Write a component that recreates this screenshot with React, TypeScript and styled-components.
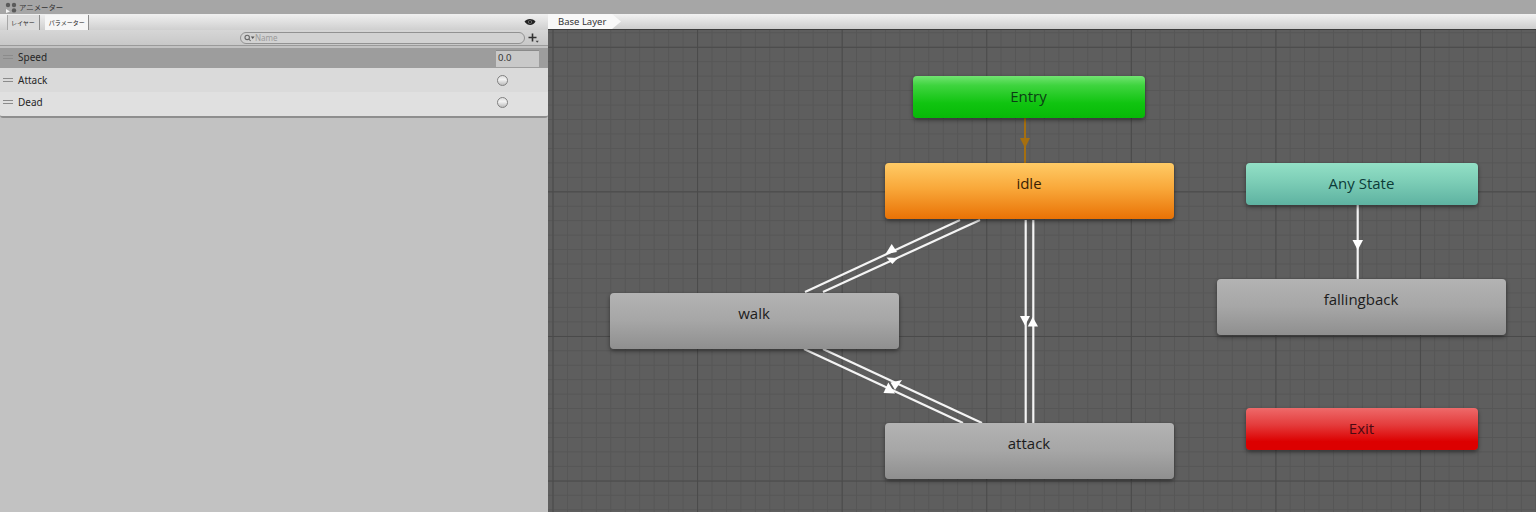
import React from "react";
import styled, { createGlobalStyle } from "styled-components";

const Global = createGlobalStyle`
  html, body { margin: 0; padding: 0; width: 1536px; height: 512px; overflow: hidden; }
  body { font-family: "Noto Sans", "Noto Sans CJK JP", sans-serif; background: #c2c2c2; }
  #root { width: 1536px; height: 512px; }
`;

const Root = styled.div`
  width: 1536px;
  height: 512px;
  display: flex;
  flex-direction: column;
`;
const TitleBar = styled.div`
  height: 14px;
  flex: none;
  background: #a6a6a6;
  display: flex;
  align-items: center;
  gap: 2px;
  padding-left: 5px;
`;
const TitleText = styled.span`
  font-family: "Noto Sans CJK JP", sans-serif;
  font-size: 7.4px;
  line-height: 14px;
  color: #333;
`;
const Main = styled.div`
  flex: 1;
  min-height: 0;
  display: flex;
`;
const LeftPanel = styled.div`
  width: 548px;
  flex: none;
  background: #c2c2c2;
  display: flex;
  flex-direction: column;
`;
const TabBar = styled.div`
  height: 16px;
  flex: none;
  display: flex;
  align-items: flex-end;
  padding-left: 7px;
  padding-right: 12px;
  gap: 5px;
  background: linear-gradient(#f0f0f0, #cfcfcf);
`;
const Tab = styled.div<{ $active?: boolean }>`
  height: 15px;
  box-sizing: border-box;
  padding: 0 ${(p) => (p.$active ? 3 : 4)}px 0 3px;
  display: flex;
  align-items: center;
  font-family: "Noto Sans CJK JP", sans-serif;
  font-size: 6px;
  color: #222;
  background: ${(p) => (p.$active ? "#f6f6f6" : "#dcdcdc")};
  border-right: 1px solid #8c8c8c;
  border-left: 1px solid ${(p) => (p.$active ? "transparent" : "#a8a8a8")};
`;
const EyeWrap = styled.div`
  margin-left: auto;
  align-self: center;
  display: flex;
`;
const SearchRow = styled.div`
  height: 16px;
  flex: none;
  box-sizing: border-box;
  display: flex;
  align-items: center;
  justify-content: flex-end;
  padding-right: 9px;
  gap: 3px;
  background: linear-gradient(#d6d6d6, #c8c8c8);
  border-bottom: 1px solid #9a9a9a;
`;
const SearchBox = styled.div`
  width: 285px;
  height: 12px;
  box-sizing: border-box;
  border: 1px solid #929292;
  border-radius: 6px;
  background: #d2d2d2;
  display: flex;
  align-items: center;
  padding-left: 3px;
  font-size: 8px;
  color: #9a9a9a;
`;
const ParamList = styled.div`
  margin-top: 2px;
  flex: none;
  border-bottom: 2px solid #8e8e8e;
  border-radius: 0 0 3px 3px;
  display: flex;
  flex-direction: column;
  overflow: hidden;
`;
const Row = styled.div<{ $bg: string; $h: number; $pb: number }>`
  height: ${(p) => p.$h}px;
  box-sizing: border-box;
  padding: 0 0 ${(p) => p.$pb}px 3px;
  background: ${(p) => p.$bg};
  display: flex;
  align-items: center;
`;
const Handle = styled.div`
  width: 10px;
  height: 2px;
  border-top: 1px solid #8b8b8b;
  border-bottom: 1px solid #8b8b8b;
  margin-right: 5px;
`;
const RowName = styled.span`
  font-size: 10px;
  color: #262626;
  flex: 1;
`;
const NumberField = styled.div`
  width: 43px;
  height: 17px;
  box-sizing: border-box;
  background: #c9c9c9;
  border-top: 1px solid #8a8a8a;
  font-size: 9.5px;
  color: #333;
  line-height: 13px;
  padding-left: 2px;
  margin: 2px 9px 0 0;
`;
const Radio = styled.div`
  width: 11px;
  height: 11px;
  box-sizing: border-box;
  border-radius: 50%;
  border: 1px solid #808080;
  background: linear-gradient(#dedede, #f2f2f2 40%, #bcbcbc);
  margin: 1px 40px 0 0;
`;
const Graph = styled.div`
  flex: 1;
  min-width: 0;
  display: flex;
  flex-direction: column;
`;
const CrumbBar = styled.div`
  height: 15px;
  flex: none;
  background: linear-gradient(#f2f2f2, #cdcdcd);
  display: flex;
`;
const Crumb = styled.div`
  width: 73px;
  box-sizing: border-box;
  padding-left: 10px;
  font-size: 9.5px;
  line-height: 15px;
  color: #333;
  background: #f8f8f8;
  clip-path: polygon(0 0, 64px 0, 100% 50%, 64px 100%, 0 100%);
`;
const Canvas = styled.div`
  flex: 1;
  min-height: 0;
  position: relative;
  overflow: hidden;
  background-color: #5e5e5e;
  background-image:
    linear-gradient(to right, #4a4a4a 1px, transparent 1px),
    linear-gradient(to bottom, #4a4a4a 1px, transparent 1px),
    linear-gradient(to right, #565656 1px, transparent 1px),
    linear-gradient(to bottom, #565656 1px, transparent 1px);
  background-size: 144.6px 100%, 100% 144.6px, 14.46px 100%, 100% 14.46px;
  background-position: 4.5px 0, 0 16.8px, 4.5px 0, 0 2.3px;
  border-top: 1px solid #3c3c3c;
  box-sizing: border-box;
`;
const Edges = styled.svg`
  position: absolute;
  left: -548px;
  top: -30px;
  width: 1536px;
  height: 512px;
`;
const tones = {
  gray: "linear-gradient(#b3b3b3, #a6a6a6 50%, #8f8f8f)",
  green: "linear-gradient(#72e472, #3fd43f 22%, #10c410 65%, #07b907)",
  orange: "linear-gradient(#ffcb66, #f9a83a 45%, #e97205)",
  teal: "linear-gradient(#93e0c6, #7ccdb6 45%, #5eb2a1)",
  red: "linear-gradient(#ee6a6a, #e43c3c 40%, #dc0000 80%)",
};
const textTones = {
  gray: "#1c1c1c",
  green: "#0b3d14",
  orange: "#3a1f05",
  teal: "#0c3b38",
  red: "#4a0a12",
};
type Tone = keyof typeof tones;
const Node = styled.div<{ $x: number; $y: number; $w: number; $h: number; $tone: Tone }>`
  position: absolute;
  left: ${(p) => p.$x - 548}px;
  top: ${(p) => p.$y - 30}px;
  width: ${(p) => p.$w}px;
  height: ${(p) => p.$h}px;
  border-radius: 4px;
  background: ${(p) => tones[p.$tone]};
  box-shadow: 0 2px 4px rgba(0, 0, 0, 0.45);
  font-family: "Open Sans", "Noto Sans", sans-serif;
  font-size: 15px;
  line-height: 41px;
  padding-right: 1px;
  box-sizing: border-box;
  text-align: center;
  color: ${(p) => textTones[p.$tone]};
`;

const nodes: { label: string; x: number; y: number; w: number; h: number; tone: Tone }[] = [
  { label: "Entry", x: 913, y: 76, w: 232, h: 42, tone: "green" },
  { label: "idle", x: 885, y: 163, w: 289, h: 56, tone: "orange" },
  { label: "Any State", x: 1246, y: 163, w: 232, h: 42, tone: "teal" },
  { label: "fallingback", x: 1217, y: 279, w: 289, h: 56, tone: "gray" },
  { label: "Exit", x: 1246, y: 408, w: 232, h: 42, tone: "red" },
  { label: "walk", x: 610, y: 293, w: 289, h: 56, tone: "gray" },
  { label: "attack", x: 885, y: 423, w: 289, h: 56, tone: "gray" },
];

const lines: [number, number, number, number][] = [
  [960, 220, 805, 292],
  [980, 220, 823, 292],
  [823, 349, 982, 423],
  [804, 349, 963, 423],
  [1025.7, 220, 1025.7, 423],
  [1033.3, 220, 1033.3, 423],
  [1357.7, 205, 1357.7, 279],
];

const arrowHeads = [
  "891.7,244 885.5,254 897,252",
  "892.3,264 886.5,257.5 898,258",
  "883.5,393 888.3,382.5 895,393.5",
  "890.5,382.5 902,380 895,390",
  "1020,316 1030,316 1025,325.5",
  "1032.7,317 1027.7,326.5 1038,326.5",
  "1352.5,240 1363,240 1357.7,250",
];

const NodeMapIcon = () => (
  <svg width="12" height="11" viewBox="0 0 12 11">
    <circle cx="3" cy="3" r="2.2" fill="#5b5b5b" />
    <circle cx="9" cy="3" r="2.2" fill="#5b5b5b" />
    <circle cx="9" cy="8.4" r="2.2" fill="#5b5b5b" />
    <path d="M1 7 L5 9.5 L1 11 Z" fill="#f4f4f4" />
  </svg>
);

const EyeIcon = () => (
  <svg width="12" height="9" viewBox="0 0 12 9">
    <path d="M0.5 3.5 C3 0.5 8 0 11.5 3.5 C9.5 7.5 4 8.8 0.5 3.5 Z" fill="#222" />
    <ellipse cx="6" cy="4" rx="2" ry="1.8" fill="#777" />
    <circle cx="6" cy="4" r="1.1" fill="#111" />
  </svg>
);

const SearchIcon = () => (
  <svg width="11" height="8" viewBox="0 0 11 8">
    <circle cx="3.2" cy="3.4" r="2.2" fill="none" stroke="#666" strokeWidth="1.1" />
    <path d="M4.8 5 L6.6 7" stroke="#666" strokeWidth="1.1" />
    <path d="M6.8 2.4 H10.6 L8.7 5 Z" fill="#555" />
  </svg>
);

const PlusIcon = () => (
  <svg width="11" height="10" viewBox="0 0 11 10">
    <path d="M4.5 0.5 V8.5 M0.5 4.5 H8.5" stroke="#333" strokeWidth="1.6" />
    <path d="M7.6 7.8 H10.8 L9.2 9.8 Z" fill="#444" />
  </svg>
);

export default function App() {
  return (
    <Root>
      <Global />
      <TitleBar>
        <NodeMapIcon />
        <TitleText>アニメーター</TitleText>
      </TitleBar>
      <Main>
        <LeftPanel>
          <TabBar>
            <Tab>レイヤー</Tab>
            <Tab $active>パラメーター</Tab>
            <EyeWrap>
              <EyeIcon />
            </EyeWrap>
          </TabBar>
          <SearchRow>
            <SearchBox>
              <SearchIcon />
              Name
            </SearchBox>
            <PlusIcon />
          </SearchRow>
          <ParamList>
            <Row $bg="#9d9d9d" $h={20} $pb={2}>
              <Handle />
              <RowName>Speed</RowName>
              <NumberField>0.0</NumberField>
            </Row>
            <Row $bg="#dadada" $h={24} $pb={1}>
              <Handle />
              <RowName>Attack</RowName>
              <Radio />
            </Row>
            <Row $bg="#e0e0e0" $h={24} $pb={4}>
              <Handle />
              <RowName>Dead</RowName>
              <Radio />
            </Row>
          </ParamList>
        </LeftPanel>
        <Graph>
          <CrumbBar>
            <Crumb>Base Layer</Crumb>
          </CrumbBar>
          <Canvas>
            <Edges viewBox="0 0 1536 512">
              <line x1="1025" y1="118" x2="1025" y2="163" stroke="#a56f10" strokeWidth="2" />
              <polygon points="1020,138 1030,138 1025,148" fill="#a56f10" />
              {lines.map(([x1, y1, x2, y2], i) => (
                <line key={i} x1={x1} y1={y1} x2={x2} y2={y2} stroke="#f4f4f4" strokeWidth="2.2" />
              ))}
              {arrowHeads.map((points) => (
                <polygon key={points} points={points} fill="#ffffff" />
              ))}
            </Edges>
            {nodes.map((n) => (
              <Node key={n.label} $x={n.x} $y={n.y} $w={n.w} $h={n.h} $tone={n.tone}>
                {n.label}
              </Node>
            ))}
          </Canvas>
        </Graph>
      </Main>
    </Root>
  );
}
